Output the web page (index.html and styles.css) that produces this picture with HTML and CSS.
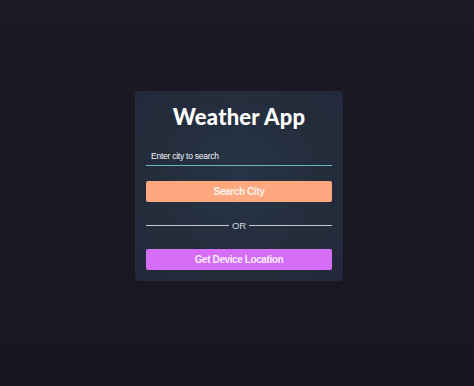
FILE: index.html
```html
<!DOCTYPE html>
<html>
<head>
<meta charset="utf-8">
<link rel="stylesheet" href="styles.css">
</head>
<body>
<main class="page">
  <section class="card">
    <h1 class="title">Weather App</h1>
    <div class="field">
      <input class="city-input" type="text" placeholder="Enter city to search">
    </div>
    <button class="btn btn-search">Search City</button>
    <div class="divider"><span class="line"></span><span class="or">OR</span><span class="line"></span></div>
    <button class="btn btn-location">Get Device Location</button>
  </section>
</main>
</body>
</html>
```
FILE: styles.css
```css
html, body {
  margin: 0;
  padding: 0;
  height: 100%;
}
body {
  background: linear-gradient(180deg, #1b1926 0%, #18161f 100%);
  font-family: "Liberation Sans", Arial, sans-serif;
}
.page {
  box-sizing: border-box;
  height: 386px;
  padding-top: 91px;
  padding-left: 135px;
}
.card {
  box-sizing: border-box;
  width: 208px;
  height: 190px;
  border-radius: 4px;
  background: radial-gradient(ellipse at 50% 45%, #263445 0%, #242d3c 55%, #23283a 100%);
  padding: 13px 11px 0 11px;
  display: flex;
  flex-direction: column;
}
.title {
  margin: 0;
  text-align: center;
  font-family: "Lato", "Inter", sans-serif;
  font-weight: 900;
  font-size: 22px;
  line-height: 26px;
  color: #ffffff;
  letter-spacing: 0.2px;
}
.field {
  margin-top: 14px;
  border-bottom: 1px solid #6fb4b8;
}
.city-input {
  box-sizing: border-box;
  display: block;
  width: 100%;
  height: 21px;
  border: 0;
  background: transparent;
  outline: none;
  padding: 2px 0 0 5px;
  font-family: "Liberation Sans", Arial, sans-serif;
  font-size: 8.5px;
  letter-spacing: -0.25px;
  color: #ffffff;
}
.city-input::placeholder {
  color: #f4f6f9;
}
.btn {
  box-sizing: border-box;
  width: 100%;
  height: 21px;
  border: 0;
  border-radius: 2px;
  font-family: "Liberation Sans", Arial, sans-serif;
  font-weight: 700;
  font-size: 10px;
  letter-spacing: -0.4px;
  color: #ffffff;
  padding: 0;
}
.btn-search {
  margin-top: 15px;
  background: #fda87e;
  color: #fff3ec;
}
.btn-location {
  margin-top: 0;
  background: #d56df6;
  color: #fbeeff;
}
.divider {
  display: flex;
  align-items: center;
  gap: 3px;
  height: 47px;
}
.line {
  flex: 1;
  height: 1px;
  background: #c4c8d0;
}
.or {
  font-size: 9.5px;
  color: #d0d4dc;
}
```
